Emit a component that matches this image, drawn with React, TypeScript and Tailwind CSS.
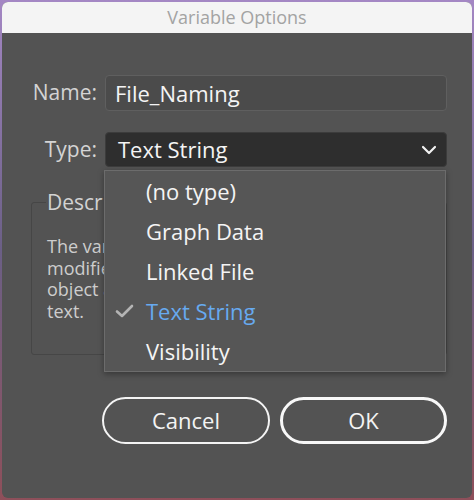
import { useState } from "react";

const FONT = { fontFamily: '"Open Sans", "Noto Sans", sans-serif' };

const TYPES = ["(no type)", "Graph Data", "Linked File", "Text String", "Visibility"];

function Chevron() {
    return (
        <svg width="16" height="10" viewBox="0 0 16 10" fill="none">
            <polyline points="2,2 8,8 14,2" stroke="#f2f2f2" strokeWidth="2.2" strokeLinecap="round" strokeLinejoin="round" />
        </svg>
    );
}

function Check() {
    return (
        <svg width="19" height="14" viewBox="0 0 19 14" fill="none">
            <polyline points="2,7.5 7,12 17,2" stroke="#b4b4b4" strokeWidth="2.6" strokeLinecap="round" strokeLinejoin="round" />
        </svg>
    );
}

export default function App() {
    const [name, setName] = useState("File_Naming");
    const selected = "Text String";

    return (
        <div
            className="h-[500px] w-[474px] p-[2px] bg-gradient-to-b from-[#a487c4] via-[#6b5f86] to-[#8e4f5a]"
            style={FONT}
        >
            <div className="flex h-full flex-col overflow-hidden rounded-[6px] bg-[#535353]">
                {/* Title bar */}
                <div className="flex h-[31px] shrink-0 items-center justify-center bg-[#f4f4f4] text-[18px] text-[#a3a3a3]">
                    Variable Options
                </div>

                {/* Body */}
                <div className="relative flex flex-1 flex-col pl-[18px] pr-[25px] pt-[42px] font-medium">
                    <div className="grid grid-cols-[77px_1fr] items-center gap-x-[8px] gap-y-[21px]">
                        <label className="text-right text-[21px] text-[#d4d4d4]">Name:</label>
                        <input
                            value={name}
                            onChange={e => setName(e.target.value)}
                            className="h-[36px] rounded-[4px] border border-[#5f5f5f] bg-[#4b4b4b] px-[9px] text-[22px] text-[#f4f4f4] outline-none"
                        />
                        <label className="text-right text-[21px] text-[#d4d4d4]">Type:</label>
                        <div className="flex h-[35px] items-center justify-between rounded-[4px] border border-[#3c3c3c] bg-[#2e2e2e] pl-[12px] pr-[9px] text-[22px] text-[#f4f4f4]">
                            <span>{selected}</span>
                            <Chevron />
                        </div>
                    </div>

                    {/* Description group */}
                    <fieldset className="ml-[11px] mt-[23px] h-[165px] rounded-[3px] border border-[#464646] px-[14px]">
                        <legend className="px-[1px] text-[21px] leading-[24px] text-[#d2d2d2]">Description</legend>
                        <p className="mt-[22px] pl-[1px] text-[18px] leading-[21.7px] text-[#cdcdcd]">
                            The variable can be
                            <br />
                            modified by binding it to a text
                            <br />
                            object and editing the
                            <br />
                            text.
                        </p>
                    </fieldset>

                    {/* Buttons */}
                    <div className="mt-[42px] flex justify-end gap-[10px]">
                        <button className="h-[47px] w-[168px] rounded-full border-2 border-[#f4f4f4] text-[22px] text-[#f4f4f4]">
                            Cancel
                        </button>
                        <button className="h-[47px] w-[167px] rounded-full border-[3px] border-[#f8f8f8] text-[22px] text-[#f4f4f4]">
                            OK
                        </button>
                    </div>

                    {/* Open dropdown menu */}
                    <div className="absolute left-[102px] top-[137px] w-[342px] border border-[#6c6c6c] bg-[#565656] shadow-[0_2px_6px_rgba(0,0,0,0.35)]">
                        {TYPES.map(t => (
                            <div key={t} className="flex h-[40px] items-center text-[22px]">
                                <span className="flex w-[41px] justify-end pr-[12px]">
                                    {t === selected ? <Check /> : null}
                                </span>
                                <span className={t === selected ? "text-[#67aaf0]" : "text-[#f4f4f4]"}>{t}</span>
                            </div>
                        ))}
                    </div>
                </div>
            </div>
        </div>
    );
}
